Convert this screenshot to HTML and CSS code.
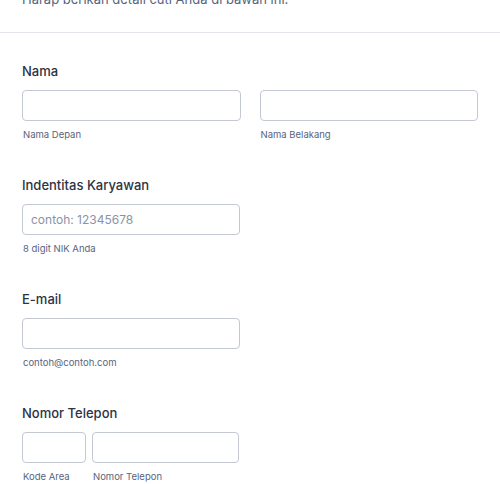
FILE: index.html
```html
<!DOCTYPE html>
<html lang="id">
<head>
    <meta charset="UTF-8">
    <meta name="viewport" content="width=device-width, initial-scale=1.0">
    <title>Formulir Cuti</title>
    <link rel="stylesheet" href="styles.css">
</head>
<body>
    <div class="form-header">
        <p class="subheader">Harap berikan detail cuti Anda di bawah ini.</p>
    </div>
    <div class="form-body">
        <div class="field">
            <label class="label">Nama</label>
            <div class="row two-col">
                <div class="sub">
                    <input class="input" type="text">
                    <span class="sublabel">Nama Depan</span>
                </div>
                <div class="sub">
                    <input class="input" type="text">
                    <span class="sublabel">Nama Belakang</span>
                </div>
            </div>
        </div>

        <div class="field">
            <label class="label">Indentitas Karyawan</label>
            <div class="row half">
                <div class="sub">
                    <input class="input" type="text" placeholder="contoh: 12345678">
                    <span class="sublabel">8 digit NIK Anda</span>
                </div>
            </div>
        </div>

        <div class="field">
            <label class="label">E-mail</label>
            <div class="row half">
                <div class="sub">
                    <input class="input" type="email">
                    <span class="sublabel">contoh@contoh.com</span>
                </div>
            </div>
        </div>

        <div class="field">
            <label class="label">Nomor Telepon</label>
            <div class="row phone">
                <div class="sub area">
                    <input class="input" type="tel">
                    <span class="sublabel">Kode Area</span>
                </div>
                <div class="sub">
                    <input class="input" type="tel">
                    <span class="sublabel">Nomor Telepon</span>
                </div>
            </div>
        </div>
    </div>
</body>
</html>
```

FILE: styles.css
```css
*{
    margin: 0;
    padding: 0;
    box-sizing: border-box;
}
body{
    background: #fff;
    font-family: Inter, "Noto Sans", sans-serif;
    color: #2c3345;
    overflow: hidden;
}
.form-header{
    margin-top: -11px;
    padding: 0 22px 23px;
    border-bottom: 1px solid #e3e5ee;
}
.subheader{
    font-size: 13px;
    line-height: 20px;
    color: #57647e;
}
.form-body{
    padding: 28px 22px 0;
    display: flex;
    flex-direction: column;
    gap: 33px;
}
.field{
    display: flex;
    flex-direction: column;
    gap: 9px;
}
.label{
    font-size: 13px;
    line-height: 20px;
    font-weight: 500;
    color: #2c3345;
}
.row{
    display: grid;
    gap: 19px;
}
.two-col{
    grid-template-columns: 1fr 1fr;
}
.half{
    grid-template-columns: 218px;
}
.phone{
    grid-template-columns: 64px 147px;
    gap: 6px;
}
.sub{
    display: flex;
    flex-direction: column;
    gap: 7px;
}
.input{
    width: 100%;
    height: 31px;
    border: 1px solid #c3c8d3;
    border-radius: 4px;
    padding: 0 8px;
    font-family: Inter, "Noto Sans", sans-serif;
    font-size: 12px;
    color: #2c3345;
    background: #fff;
    outline: none;
}
.input::placeholder{
    color: #8c93a6;
}
.sublabel{
    font-size: 9.5px;
    line-height: 14px;
    color: #57647e;
    padding-left: 1px;
}
```
